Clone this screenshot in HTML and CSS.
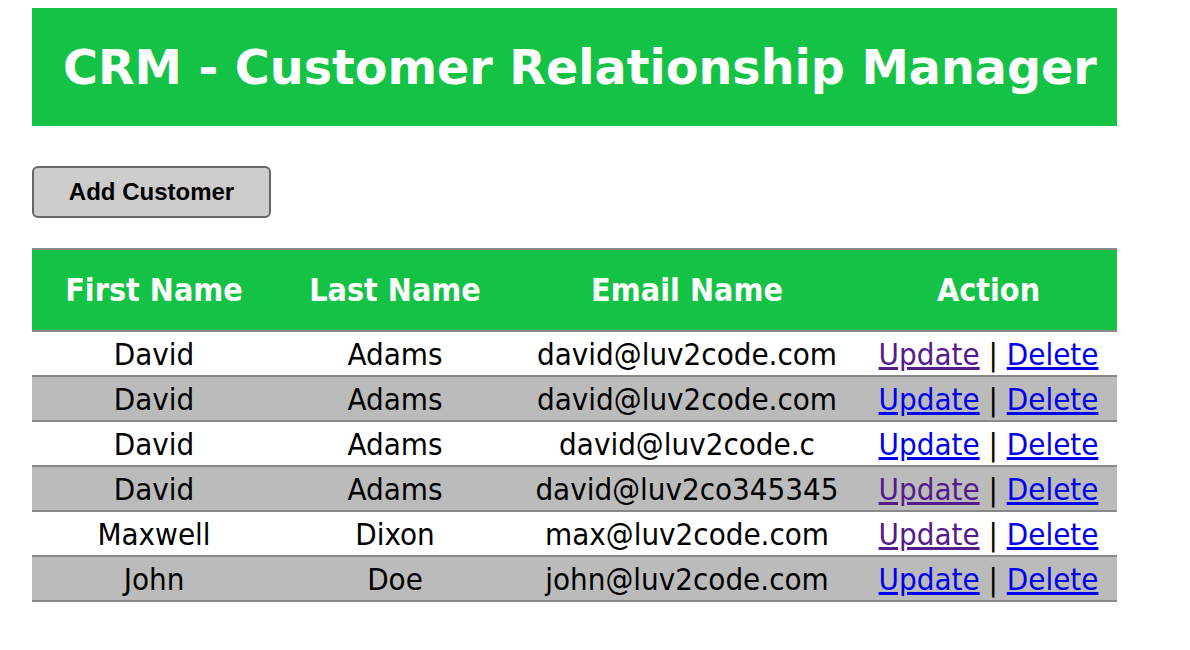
FILE: index.html
```html
<!DOCTYPE html>
<html lang="en">
<head>
  <meta charset="UTF-8">
  <title>CRM - Customer Relationship Manager</title>
  <link rel="stylesheet" href="styles.css">
</head>
<body>

<div id="wrapper">
  <div id="header">
    <h2>CRM - Customer Relationship Manager</h2>
  </div>

  <div id="container">
    <input type="button" value="Add Customer" class="add-button">

    <table>
      <tr>
        <th class="col-first">First Name</th>
        <th class="col-last">Last Name</th>
        <th class="col-email">Email Name</th>
        <th class="col-action">Action</th>
      </tr>
      <tr>
        <td>David</td>
        <td>Adams</td>
        <td>david@luv2code.com</td>
        <td><a href="#" class="visited">Update</a> | <a href="#">Delete</a></td>
      </tr>
      <tr>
        <td>David</td>
        <td>Adams</td>
        <td>david@luv2code.com</td>
        <td><a href="#">Update</a> | <a href="#">Delete</a></td>
      </tr>
      <tr>
        <td>David</td>
        <td>Adams</td>
        <td>david@luv2code.c</td>
        <td><a href="#">Update</a> | <a href="#">Delete</a></td>
      </tr>
      <tr>
        <td>David</td>
        <td>Adams</td>
        <td>david@luv2co345345</td>
        <td><a href="#" class="visited">Update</a> | <a href="#">Delete</a></td>
      </tr>
      <tr>
        <td>Maxwell</td>
        <td>Dixon</td>
        <td>max@luv2code.com</td>
        <td><a href="#" class="visited">Update</a> | <a href="#">Delete</a></td>
      </tr>
      <tr>
        <td>John</td>
        <td>Doe</td>
        <td>john@luv2code.com</td>
        <td><a href="#">Update</a> | <a href="#">Delete</a></td>
      </tr>
    </table>
  </div>
</div>

</body>
</html>
```

FILE: styles.css
```css
html, body {
  margin: 0;
  padding: 0;
  background: #fff;
  font-family: "DejaVu Sans Condensed", "DejaVu Sans", sans-serif;
  font-stretch: condensed;
}

#wrapper {
  width: 1085px;
  padding: 8px 0 0 32px;
}

#header {
  height: 118px;
  background: #14c345;
  display: flex;
  align-items: center;
}

#header h2 {
  margin: 0 0 0 31px;
  color: #fff;
  font-family: "DejaVu Sans", sans-serif;
  font-stretch: normal;
  font-size: 47.6px;
  font-weight: bold;
}

#container {
  padding-top: 40px;
}

.add-button {
  display: block;
  width: 239px;
  height: 52px;
  margin: 0 0 30px 0;
  border: 2px solid #666;
  border-radius: 6px;
  background: #ccc;
  font-family: "Liberation Sans", Arial, sans-serif;
  font-size: 24px;
  font-weight: bold;
  color: #000;
}

table {
  width: 1085px;
  border-collapse: collapse;
  border-top: 2px solid #888;
}

th {
  height: 80px;
  padding: 0;
  background: #14c345;
  color: #fff;
  font-size: 32px;
  font-weight: bold;
  text-align: center;
  border-bottom: 2px solid #888;
}

td {
  height: 43px;
  padding: 0;
  font-size: 31px;
  text-align: center;
  border-bottom: 2px solid #888;
}

tr:nth-child(odd) td {
  background: #bbb;
}

.col-first { width: 244px; }
.col-last { width: 238px; }
.col-email { width: 346px; }
.col-action { width: 257px; }

a {
  color: #0000ee;
}

a.visited {
  color: #551a8b;
}
```
